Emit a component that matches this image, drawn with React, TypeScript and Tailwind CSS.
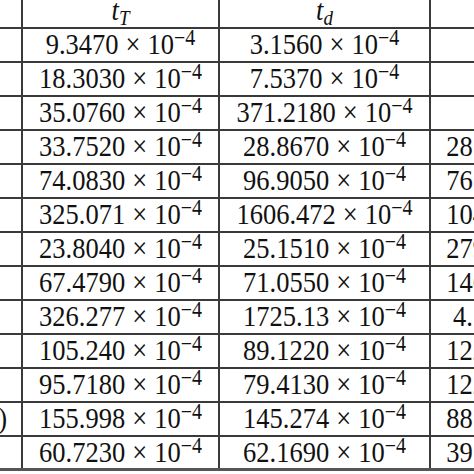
const ROWS: { a: string; tT: string; td: string; r: string }[] = [
  { a: "", tT: "9.3470", td: "3.1560", r: "" },
  { a: "", tT: "18.3030", td: "7.5370", r: "" },
  { a: "", tT: "35.0760", td: "371.2180", r: "" },
  { a: "", tT: "33.7520", td: "28.8670", r: "281.57300" },
  { a: "", tT: "74.0830", td: "96.9050", r: "76.104000" },
  { a: "", tT: "325.071", td: "1606.472", r: "1043.2510" },
  { a: "", tT: "23.8040", td: "25.1510", r: "279.63400" },
  { a: "", tT: "67.4790", td: "71.0550", r: "146.26500" },
  { a: "", tT: "326.277", td: "1725.13", r: "4.163500" },
  { a: "", tT: "105.240", td: "89.1220", r: "122.45300" },
  { a: "", tT: "95.7180", td: "79.4130", r: "122.01800" },
  { a: "(1000, 2000)", tT: "155.998", td: "145.274", r: "88.437000" },
  { a: "", tT: "60.7230", td: "62.1690", r: "391.20700" },
];

function Sci({ v }: { v: string }) {
  if (!v) return null;
  return (
    <span className="inline-block whitespace-nowrap scale-y-[1.12]">
      {v}
      <span className="mx-[7px]">×</span>
      10
      <span className="relative -top-[8px] text-[20px] leading-none">−4</span>
    </span>
  );
}

export default function App() {
  return (
    <div
      className="w-[474px] h-[474px] overflow-hidden bg-white text-[#111] text-[26.5px] leading-none"
      style={{ fontFamily: '"Liberation Serif", "Times New Roman", serif' }}
    >
      {/* header */}
      <div className="flex h-[29px] border-b-2 border-[#3a3a3a]">
        <div className="w-[23px] shrink-0 border-r-2 border-[#3a3a3a]" />
        <div className="w-[197px] shrink-0 border-r-2 border-[#3a3a3a] flex items-end justify-center pb-[4px]">
          <span className="inline-block italic scale-y-[1.12]">
            t<span className="text-[19px] relative top-[4px]">T</span>
          </span>
        </div>
        <div className="w-[211px] shrink-0 border-r-2 border-[#3a3a3a] flex items-end justify-center pb-[4px]">
          <span className="inline-block italic scale-y-[1.12]">
            t<span className="text-[19px] relative top-[4px]">d</span>
          </span>
        </div>
        <div className="w-[210px] shrink-0" />
      </div>

      {ROWS.map((row, i) => (
        <div
          key={i}
          className={
            i === ROWS.length - 1
              ? "flex h-[34px] border-b-[3px] border-[#555]"
              : "flex h-[34px] border-b-2 border-[#3a3a3a]"
          }
        >
          <div className="w-[23px] shrink-0 border-r-2 border-[#3a3a3a] flex items-center justify-end overflow-hidden pr-[14px] pb-[1px]">
            <span className="inline-block whitespace-nowrap scale-y-[1.12]">{row.a}</span>
          </div>
          <div className="w-[197px] shrink-0 border-r-2 border-[#3a3a3a] flex items-center justify-center pb-[1px]">
            <Sci v={row.tT} />
          </div>
          <div className="w-[211px] shrink-0 border-r-2 border-[#3a3a3a] flex items-center justify-center pb-[1px]">
            <Sci v={row.td} />
          </div>
          <div className="w-[210px] shrink-0 flex items-center justify-center pb-[1px] pl-[10px]">
            <Sci v={row.r} />
          </div>
        </div>
      ))}
    </div>
  );
}
